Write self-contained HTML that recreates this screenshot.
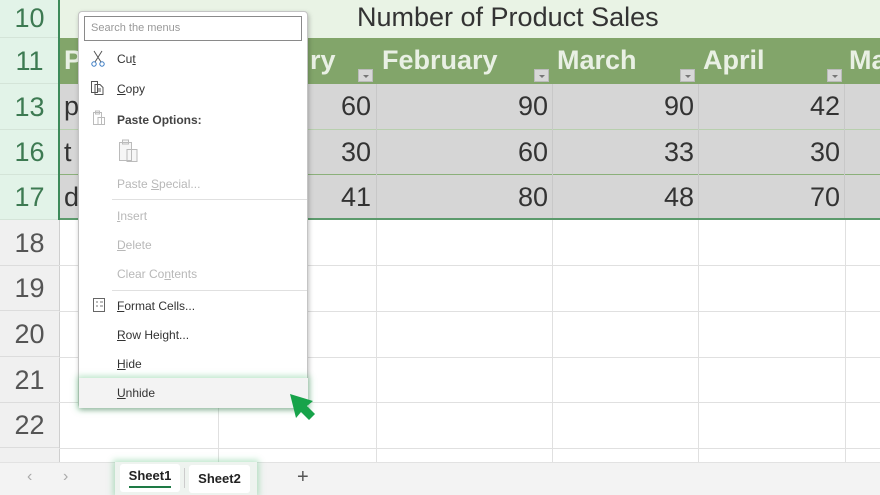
<!DOCTYPE html>
<html><head><meta charset="utf-8"><style>
*{margin:0;padding:0;box-sizing:border-box}
body{width:880px;height:495px;overflow:hidden;background:#fff;font-family:"Liberation Sans",sans-serif;position:relative}
.abs{position:absolute}
.rh{position:absolute;left:0;width:59px;font-size:27px;color:#3d7a52;text-align:center;border-bottom:1px solid #d4e4d8}
.rhg{color:#555;border-bottom:1px solid #dcdcdc;background:#f0f0f0}
.hl{position:absolute;left:59px;right:0;height:1px;background:#e0e0e0}
.vl{position:absolute;width:1px;background:#e0e0e0}
.hdr{position:absolute;top:38px;height:46px;background:#82a56a;color:#e9f0e4;font-size:27px;font-weight:bold;padding-left:4px;line-height:44px}
.num{position:absolute;font-size:27px;color:#333;text-align:right;line-height:45px}
.dd{position:absolute;width:15px;height:13px;background:#d8d8d8;border:1px solid #bbb;top:69px}
.dd:after{content:"";position:absolute;left:4px;top:5px;border:3px solid transparent;border-top:3px solid #777}
.mi{position:absolute;left:117px;font-size:12px;color:#333}
.dis{color:#b8b8b8}
u{text-decoration:underline}
</style></head><body>
<div class="abs" style="left:0;top:0;width:59px;height:220px;background:#e2f3e8"></div>
<div class="rh" style="top:0;height:38px;line-height:36px">10</div>
<div class="rh" style="top:38px;height:46px;line-height:46px">11</div>
<div class="rh" style="top:84px;height:46px;line-height:46px">13</div>
<div class="rh" style="top:130px;height:45px;line-height:45px">16</div>
<div class="rh" style="top:175px;height:45px;line-height:45px">17</div>
<div class="rh rhg" style="top:220px;height:46px;line-height:46px">18</div>
<div class="rh rhg" style="top:266px;height:45px;line-height:45px">19</div>
<div class="rh rhg" style="top:311px;height:46px;line-height:46px">20</div>
<div class="rh rhg" style="top:357px;height:46px;line-height:46px">21</div>
<div class="rh rhg" style="top:403px;height:45px;line-height:45px">22</div>
<div class="rh rhg" style="top:448px;height:20px"></div>
<div class="abs" style="left:58px;top:0;width:2px;height:220px;background:#3d8a5a"></div>
<div class="abs" style="left:59px;top:220px;width:1px;height:245px;background:#cfcfcf"></div>
<div class="abs" style="left:60px;top:0;right:0;height:38px;background:#e9f3e5"></div>
<div class="abs" style="left:357px;top:0;font-size:27px;color:#333;line-height:34px">Number of Product Sales</div>
<div class="hdr" style="left:60px;width:820px">P</div>
<div class="hdr" style="left:310px;width:70px;padding-left:0">ry</div>
<div class="hdr" style="left:378px;width:170px">February</div>
<div class="hdr" style="left:553px;width:145px">March</div>
<div class="hdr" style="left:699px;width:145px">April</div>
<div class="hdr" style="left:845px;width:40px">Ma</div>
<div class="dd" style="left:358px"></div><div class="dd" style="left:534px"></div><div class="dd" style="left:680px"></div><div class="dd" style="left:827px"></div>
<div class="abs" style="left:60px;top:84px;right:0;height:136px;background:#d6d6d6"></div>
<div class="abs" style="left:60px;top:129px;right:0;height:1px;background:#b8cfae"></div>
<div class="abs" style="left:60px;top:174px;right:0;height:1px;background:#8bb07a"></div>
<div class="abs" style="left:60px;top:218px;right:0;height:2px;background:#5c9a6c"></div>
<div class="vl" style="left:376px;top:84px;height:134px;background:#c8c8c8"></div>
<div class="vl" style="left:552px;top:84px;height:134px;background:#c8c8c8"></div>
<div class="vl" style="left:698px;top:84px;height:134px;background:#c8c8c8"></div>
<div class="vl" style="left:844px;top:84px;height:134px;background:#c8c8c8"></div>
<div class="abs" style="left:64px;top:84px;font-size:27px;color:#333;line-height:45px">p</div>
<div class="abs" style="left:64px;top:130px;font-size:27px;color:#333;line-height:45px">t</div>
<div class="abs" style="left:64px;top:175px;font-size:27px;color:#333;line-height:45px">d</div>
<div class="num" style="left:300px;width:71px;top:84px">60</div>
<div class="num" style="left:440px;width:108px;top:84px">90</div>
<div class="num" style="left:590px;width:104px;top:84px">90</div>
<div class="num" style="left:740px;width:100px;top:84px">42</div>
<div class="num" style="left:300px;width:71px;top:130px">30</div>
<div class="num" style="left:440px;width:108px;top:130px">60</div>
<div class="num" style="left:590px;width:104px;top:130px">33</div>
<div class="num" style="left:740px;width:100px;top:130px">30</div>
<div class="num" style="left:300px;width:71px;top:175px">41</div>
<div class="num" style="left:440px;width:108px;top:175px">80</div>
<div class="num" style="left:590px;width:104px;top:175px">48</div>
<div class="num" style="left:740px;width:100px;top:175px">70</div>
<div class="hl" style="top:265px"></div><div class="hl" style="top:311px"></div><div class="hl" style="top:357px"></div><div class="hl" style="top:402px"></div><div class="hl" style="top:448px"></div>
<div class="vl" style="left:218px;top:220px;height:245px"></div>
<div class="vl" style="left:376px;top:220px;height:245px"></div>
<div class="vl" style="left:552px;top:220px;height:245px"></div>
<div class="vl" style="left:698px;top:220px;height:245px"></div>
<div class="vl" style="left:845px;top:220px;height:245px"></div>
<div class="abs" style="left:0;top:462px;width:880px;height:33px;background:#f3f3f3;border-top:1px solid #e2e2e2"></div>
<div class="abs" style="left:27px;top:468px;font-size:16px;color:#aaa">&#8249;</div>
<div class="abs" style="left:63px;top:468px;font-size:16px;color:#aaa">&#8250;</div>
<div class="abs" style="left:115px;top:462px;width:142px;height:33px;box-shadow:0 0 6px 2px rgba(60,180,100,.35);background:#eef3ef"></div>
<div class="abs" style="left:120px;top:464px;width:60px;height:28px;background:#fff;border-radius:3px;font-size:13px;font-weight:bold;color:#222;text-align:center;line-height:24px">Sheet1<div style="position:absolute;left:9px;right:9px;bottom:4px;height:2px;background:#1e7a45"></div></div>
<div class="abs" style="left:184px;top:468px;width:1px;height:20px;background:#ccc"></div>
<div class="abs" style="left:189px;top:465px;width:61px;height:28px;background:#fff;border-radius:3px;font-size:13px;font-weight:bold;color:#222;text-align:center;line-height:28px">Sheet2</div>
<div class="abs" style="left:297px;top:466px;font-size:20px;color:#555">+</div>
<div class="abs" style="left:78px;top:11px;width:230px;height:397px;background:#fff;border:1px solid #c4c4c4;border-radius:4px;box-shadow:1px 2px 5px rgba(0,0,0,.25)"></div>
<div class="abs" style="left:84px;top:16px;width:218px;height:25px;border:1px solid #8a8a8a;font-size:11px;color:#999;padding-left:6px;line-height:22px">Search the menus</div>
<svg class="abs" style="left:90px;top:50px" width="16" height="18" viewBox="0 0 16 18"><path d="M4 1 L11 12 M12 1 L5 12" stroke="#555" stroke-width="1" fill="none"/><circle cx="4" cy="14" r="2.2" stroke="#3a7cc4" fill="none"/><circle cx="12" cy="14" r="2.2" stroke="#3a7cc4" fill="none"/></svg>
<div class="mi" style="top:52px">Cu<u>t</u></div>
<svg class="abs" style="left:90px;top:80px" width="16" height="16" viewBox="0 0 16 16"><path d="M1.5 1.5h6v11h-6z M5 4.5h5l3 3v7H5z M7 9h4M7 11h4" stroke="#555" fill="#fff"/></svg>
<div class="mi" style="top:82px"><u>C</u>opy</div>
<svg class="abs" style="left:92px;top:110px" width="14" height="16" viewBox="0 0 14 16"><path d="M1.5 2.5h8v12h-8z M3.5 1h4v3h-4z M6 7.5h6.5v7H6z" stroke="#bbb" fill="#fff"/></svg>
<div class="mi" style="top:113px;font-weight:bold;color:#444">Paste Options:</div>
<svg class="abs" style="left:118px;top:139px" width="24" height="24" viewBox="0 0 24 24"><path d="M1.5 3.5h12v18h-12z M4.5 1h6v4h-6z M9 10.5h10v12H9z" stroke="#bbb" fill="#f6f6f6"/></svg>
<div class="mi dis" style="top:177px">Paste <u>S</u>pecial...</div>
<div class="abs" style="left:112px;top:199px;width:195px;height:1px;background:#e0e0e0"></div>
<div class="mi dis" style="top:209px"><u>I</u>nsert</div>
<div class="mi dis" style="top:238px"><u>D</u>elete</div>
<div class="mi dis" style="top:267px">Clear Co<u>n</u>tents</div>
<div class="abs" style="left:112px;top:290px;width:195px;height:1px;background:#e0e0e0"></div>
<svg class="abs" style="left:92px;top:297px" width="14" height="16" viewBox="0 0 14 16"><path d="M1.5 1.5h11v13h-11z" stroke="#666" fill="#fff"/><path d="M4 5h2M8 5h3M4 9h2M8 9h3" stroke="#777"/></svg>
<div class="mi" style="top:299px"><u>F</u>ormat Cells...</div>
<div class="mi" style="top:328px"><u>R</u>ow Height...</div>
<div class="mi" style="top:357px"><u>H</u>ide</div>
<div class="abs" style="left:79px;top:378px;width:229px;height:30px;background:#f3f3f3;box-shadow:0 0 6px 2px rgba(60,180,100,.35)"></div>
<div class="mi" style="top:386px"><u>U</u>nhide</div>
<svg class="abs" style="left:285px;top:390px" width="35" height="35" viewBox="0 0 35 35"><polygon points="5,4 28,11 22,16 30,24 24,30 16,22 11,28" fill="#17a34a"/></svg>
</body></html>
